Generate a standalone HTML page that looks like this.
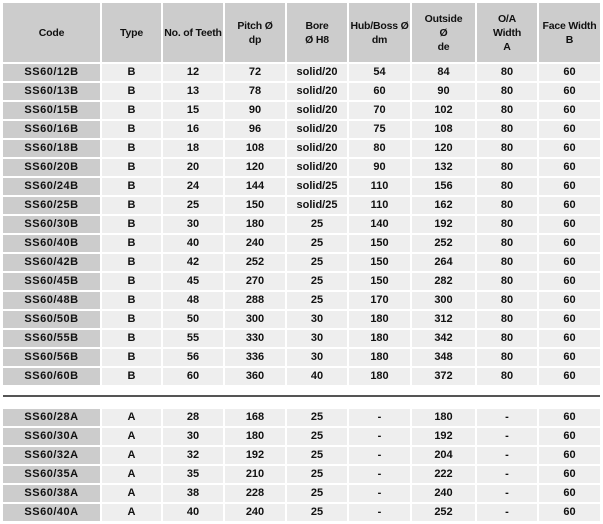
<!DOCTYPE html>
<html><head><style>
body{margin:0;width:603px;height:524px;background:#fff;position:relative;overflow:hidden;font-family:"Liberation Sans",Arial,sans-serif;}
table{position:absolute;left:1px;width:601px;border-collapse:separate;border-spacing:2px;table-layout:fixed;font-size:11px;font-weight:bold;color:#111;}
td,th{padding:0;text-align:center;background:#eee;height:17px;line-height:17px;overflow:visible;white-space:nowrap}
th{background:#ccc;height:59px;line-height:14px;font-weight:bold;font-size:10.5px;letter-spacing:-0.2px}
td:first-child{background:#ccc;letter-spacing:0.5px}
.line{position:absolute;left:3px;top:395px;width:597px;height:2px;background:#555;}
</style></head><body>
<table style="top:1px">
<colgroup><col style="width:97px"><col style="width:59px"><col style="width:60px"><col style="width:60px"><col style="width:60px"><col style="width:61px"><col style="width:63px"><col style="width:60px"><col style="width:61px"></colgroup>
<tr><th>Code</th><th>Type</th><th>No. of Teeth</th><th>Pitch Ø<br>dp</th><th>Bore<br>Ø H8</th><th>Hub/Boss Ø<br>dm</th><th>Outside<br>Ø<br>de</th><th>O/A<br>Width<br>A</th><th>Face Width<br>B</th></tr>
<tr><td>SS60/12B</td><td>B</td><td>12</td><td>72</td><td>solid/20</td><td>54</td><td>84</td><td>80</td><td>60</td></tr>
<tr><td>SS60/13B</td><td>B</td><td>13</td><td>78</td><td>solid/20</td><td>60</td><td>90</td><td>80</td><td>60</td></tr>
<tr><td>SS60/15B</td><td>B</td><td>15</td><td>90</td><td>solid/20</td><td>70</td><td>102</td><td>80</td><td>60</td></tr>
<tr><td>SS60/16B</td><td>B</td><td>16</td><td>96</td><td>solid/20</td><td>75</td><td>108</td><td>80</td><td>60</td></tr>
<tr><td>SS60/18B</td><td>B</td><td>18</td><td>108</td><td>solid/20</td><td>80</td><td>120</td><td>80</td><td>60</td></tr>
<tr><td>SS60/20B</td><td>B</td><td>20</td><td>120</td><td>solid/20</td><td>90</td><td>132</td><td>80</td><td>60</td></tr>
<tr><td>SS60/24B</td><td>B</td><td>24</td><td>144</td><td>solid/25</td><td>110</td><td>156</td><td>80</td><td>60</td></tr>
<tr><td>SS60/25B</td><td>B</td><td>25</td><td>150</td><td>solid/25</td><td>110</td><td>162</td><td>80</td><td>60</td></tr>
<tr><td>SS60/30B</td><td>B</td><td>30</td><td>180</td><td>25</td><td>140</td><td>192</td><td>80</td><td>60</td></tr>
<tr><td>SS60/40B</td><td>B</td><td>40</td><td>240</td><td>25</td><td>150</td><td>252</td><td>80</td><td>60</td></tr>
<tr><td>SS60/42B</td><td>B</td><td>42</td><td>252</td><td>25</td><td>150</td><td>264</td><td>80</td><td>60</td></tr>
<tr><td>SS60/45B</td><td>B</td><td>45</td><td>270</td><td>25</td><td>150</td><td>282</td><td>80</td><td>60</td></tr>
<tr><td>SS60/48B</td><td>B</td><td>48</td><td>288</td><td>25</td><td>170</td><td>300</td><td>80</td><td>60</td></tr>
<tr><td>SS60/50B</td><td>B</td><td>50</td><td>300</td><td>30</td><td>180</td><td>312</td><td>80</td><td>60</td></tr>
<tr><td>SS60/55B</td><td>B</td><td>55</td><td>330</td><td>30</td><td>180</td><td>342</td><td>80</td><td>60</td></tr>
<tr><td>SS60/56B</td><td>B</td><td>56</td><td>336</td><td>30</td><td>180</td><td>348</td><td>80</td><td>60</td></tr>
<tr><td>SS60/60B</td><td>B</td><td>60</td><td>360</td><td>40</td><td>180</td><td>372</td><td>80</td><td>60</td></tr>
</table>
<div class="line"></div>
<table style="top:407px">
<colgroup><col style="width:97px"><col style="width:59px"><col style="width:60px"><col style="width:60px"><col style="width:60px"><col style="width:61px"><col style="width:63px"><col style="width:60px"><col style="width:61px"></colgroup>
<tr><td>SS60/28A</td><td>A</td><td>28</td><td>168</td><td>25</td><td>-</td><td>180</td><td>-</td><td>60</td></tr>
<tr><td>SS60/30A</td><td>A</td><td>30</td><td>180</td><td>25</td><td>-</td><td>192</td><td>-</td><td>60</td></tr>
<tr><td>SS60/32A</td><td>A</td><td>32</td><td>192</td><td>25</td><td>-</td><td>204</td><td>-</td><td>60</td></tr>
<tr><td>SS60/35A</td><td>A</td><td>35</td><td>210</td><td>25</td><td>-</td><td>222</td><td>-</td><td>60</td></tr>
<tr><td>SS60/38A</td><td>A</td><td>38</td><td>228</td><td>25</td><td>-</td><td>240</td><td>-</td><td>60</td></tr>
<tr><td>SS60/40A</td><td>A</td><td>40</td><td>240</td><td>25</td><td>-</td><td>252</td><td>-</td><td>60</td></tr>
</table>
</body></html>
